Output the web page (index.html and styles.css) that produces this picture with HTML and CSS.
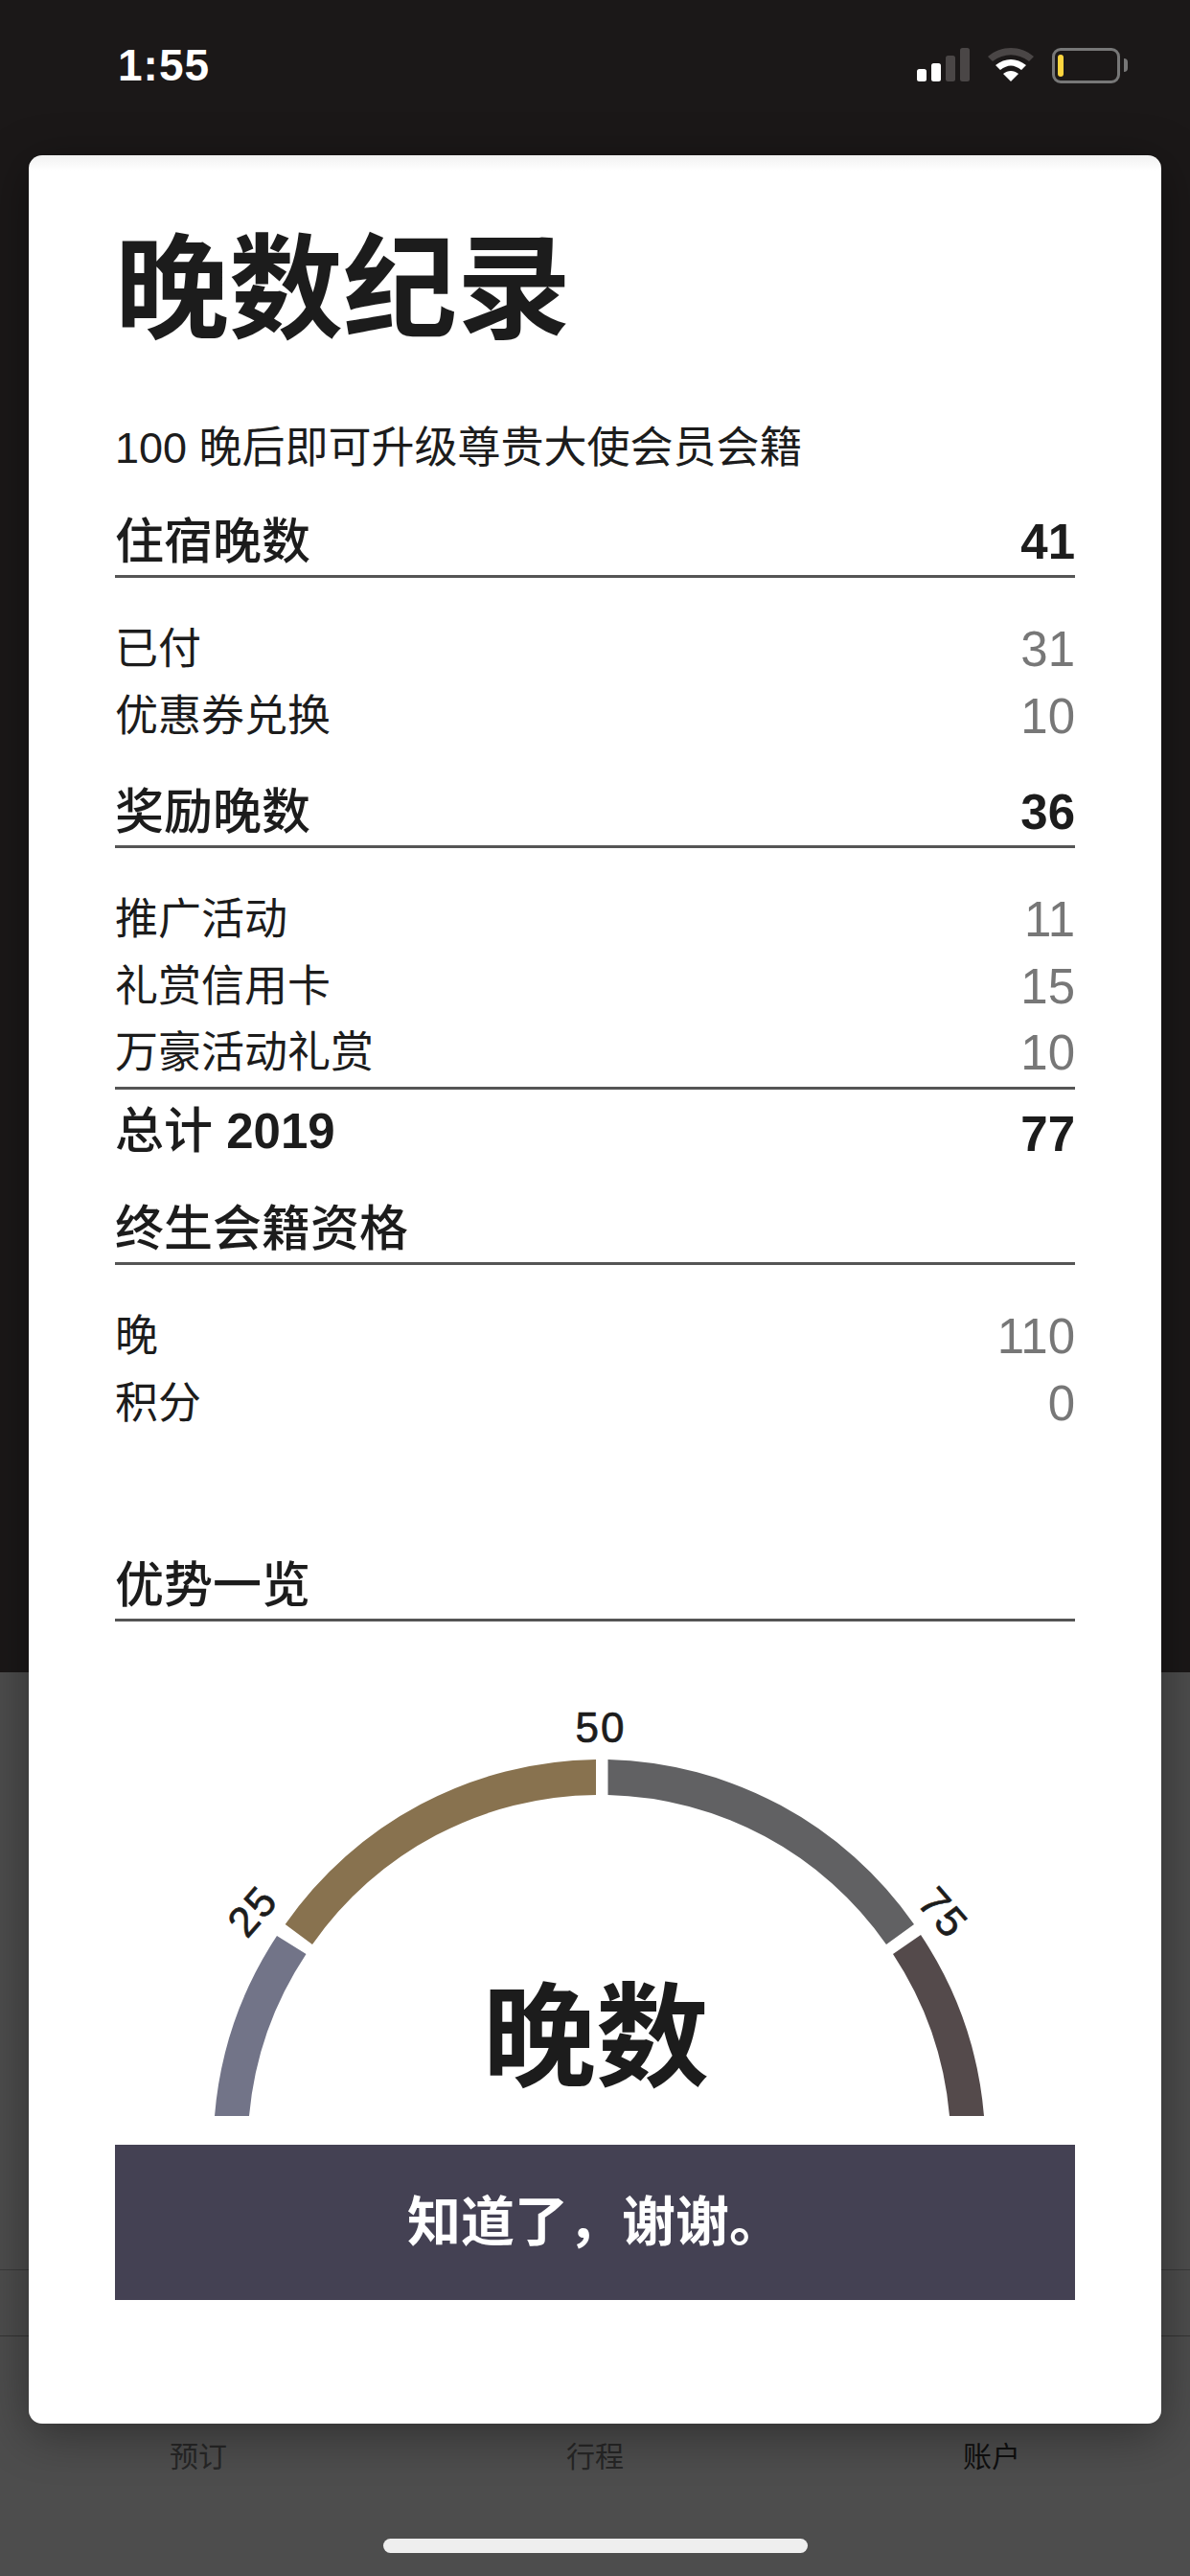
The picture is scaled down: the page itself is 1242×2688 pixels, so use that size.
FILE: index.html
```html
<!DOCTYPE html>
<html lang="zh">
<head>
    <title>晚数纪录</title>
    <meta name="viewport" content="width=device-width, initial-scale=1">
    <link rel="stylesheet" href="styles.css">
</head>

<body>
<div class="screen">
    <div class="upper">
        <div class="status">
            <span class="time">1:55</span>
            <div class="status-icons">
                <svg class="signal" width="55" height="36" viewBox="0 0 55 36">
                    <rect x="0" y="22" width="10" height="13" rx="2.5" fill="#fff"/>
                    <rect x="15" y="16" width="10" height="19" rx="2.5" fill="#fff"/>
                    <rect x="30" y="8" width="10" height="27" rx="2.5" fill="#4a4646"/>
                    <rect x="45" y="0" width="10" height="35" rx="2.5" fill="#4a4646"/>
                </svg>
                <svg class="wifi" width="48" height="36" viewBox="0 0 48 36">
                    <path d="M0 9 C14 -3 34 -3 48 9 L43 14 C31 5 17 5 5 14 Z" fill="#4a4646"/>
                    <path d="M8 18 C18 10 30 10 40 18 L35 23 C27 17 21 17 13 23 Z" fill="#fff"/>
                    <path d="M16 27 C21 23 27 23 32 27 L24 35 Z" fill="#fff"/>
                </svg>
                <div class="battery">
                    <div class="battery-body"><div class="battery-level"></div></div>
                    <div class="battery-cap"></div>
                </div>
            </div>
        </div>
    </div>

    <div class="lower">
        <div class="lower-band"></div>
        <div class="tabs">
            <span>预订</span>
            <span>行程</span>
            <span class="tab-on">账户</span>
        </div>
        <div class="home-bar"></div>
    </div>

    <div class="sheet">
        <h1 class="title">晚数纪录</h1>
        <p class="intro">100 晚后即可升级尊贵大使会员会籍</p>

        <div class="head head-stay"><span>住宿晚数</span><span class="num">41</span></div>
        <div class="rows">
            <div class="row"><span>已付</span><span class="val">31</span></div>
            <div class="row"><span>优惠券兑换</span><span class="val">10</span></div>
        </div>

        <div class="head"><span>奖励晚数</span><span class="num">36</span></div>
        <div class="rows">
            <div class="row"><span>推广活动</span><span class="val">11</span></div>
            <div class="row"><span>礼赏信用卡</span><span class="val">15</span></div>
            <div class="row"><span>万豪活动礼赏</span><span class="val">10</span></div>
        </div>

        <div class="total"><span>总计 <span class="num">2019</span></span><span class="num total-num">77</span></div>

        <div class="head head-life"><span>终生会籍资格</span></div>
        <div class="rows">
            <div class="row"><span>晚</span><span class="val">110</span></div>
            <div class="row"><span>积分</span><span class="val">0</span></div>
        </div>

        <div class="head head-glance"><span>优势一览</span></div>

        <svg class="gauge" width="1002" height="500" viewBox="120 1740 1002 500">
            <path d="M224 2208 A401.500 401.500 0 0 1 289 2020 L319.500 2039 A365 365 0 0 0 260 2208 Z" fill="#727488"/>
            <path d="M297.700 2008 A401.500 401.500 0 0 1 622 1836 L622 1873 A365 365 0 0 0 326 2029 Z" fill="#88724f"/>
            <path d="M634.500 1836 A401.500 401.500 0 0 1 954 2008 L925 2029 A365 365 0 0 0 634.500 1873 Z" fill="#616163"/>
            <path d="M961 2019 A401.500 401.500 0 0 1 1027 2208 L991 2208 A365 365 0 0 0 932 2039 Z" fill="#544a4b"/>
            <text class="gauge-tick" x="627" y="1818" text-anchor="middle">50</text>
            <text class="gauge-tick" text-anchor="middle" transform="translate(275 2004) rotate(-49)">25</text>
            <text class="gauge-tick" text-anchor="middle" transform="translate(973 2006) rotate(49)">75</text>
            <text class="gauge-word" x="622" y="2168" text-anchor="middle">晚数</text>
        </svg>

        <div class="ok-btn">知道了，谢谢。</div>
    </div>
</div>
</body>
</html>
```

FILE: styles.css
```css
html, body {
    margin: 0;
    padding: 0;
}
body {
    width: 1242px;
    height: 2688px;
    overflow: hidden;
    font-family: "Liberation Sans", "Noto Sans CJK SC", sans-serif;
    color: #1c1c1c;
}
.screen {
    position: relative;
    width: 1242px;
    height: 2688px;
    display: flex;
    flex-direction: column;
}
.upper {
    height: 1745px;
    background-color: #1b1818;
}
.status {
    display: flex;
    justify-content: space-between;
    align-items: center;
    height: 50px;
    padding: 43px 65px 0 123px;
}
.time {
    color: #fff;
    font-size: 46px;
    font-weight: 700;
    letter-spacing: 1px;
}
.status-icons {
    display: flex;
    align-items: center;
    gap: 19px;
}
.battery {
    display: flex;
    align-items: center;
}
.battery-body {
    box-sizing: border-box;
    width: 71px;
    height: 37px;
    padding: 4px 3px;
    border: 3px solid #777;
    border-radius: 9px;
}
.battery-level {
    width: 6px;
    height: 23px;
    border-radius: 3px;
    background-color: #fcd53f;
}
.battery-cap {
    width: 4px;
    height: 14px;
    margin-left: 4px;
    border-radius: 0 5px 5px 0;
    background-color: #777;
}
.lower {
    flex: 1;
    display: flex;
    flex-direction: column;
    background-color: #4d4d4d;
}
.lower-band {
    height: 68px;
    margin-top: 623px;
    border-top: 1px solid #3a3a3a;
    border-bottom: 1px solid #353535;
}
.tabs {
    display: grid;
    grid-template-columns: repeat(3, 1fr);
    margin-top: 106px;
    font-size: 30px;
    line-height: 40px;
    text-align: center;
    color: #262626;
}
.tab-on {
    color: #0f0f0f;
}
.home-bar {
    width: 443px;
    height: 15px;
    margin: 65px auto 0;
    border-radius: 8px;
    background-color: #eeeeee;
}
.sheet {
    position: absolute;
    top: 162px;
    left: 30px;
    box-sizing: border-box;
    width: 1182px;
    height: 2367px;
    padding: 75px 90px 0;
    border-radius: 14px;
    background: linear-gradient(#f1f1f1, #fff 16px);
    box-shadow: 0 10px 50px rgba(0, 0, 0, 0.4);
}
.title {
    margin: 0;
    font-size: 119px;
    line-height: 132px;
    font-weight: 700;
}
.intro {
    margin: 64px 0 0;
    font-size: 45px;
    line-height: 69px;
}
.head, .total {
    display: flex;
    justify-content: space-between;
    font-size: 51px;
    line-height: 69px;
    font-weight: 500;
}
.head {
    margin-top: 31px;
    border-bottom: 3px solid #555;
}
.head-stay {
    margin-top: 29px;
}
.num {
    font-size: 51px;
    font-weight: 700;
}
.rows {
    margin-top: 40px;
}
.row {
    display: flex;
    justify-content: space-between;
    font-size: 45px;
    line-height: 69.500px;
}
.val {
    font-size: 51px;
    color: #777;
}
.total {
    margin-top: 0.500px;
    padding-top: 9px;
    border-top: 3px solid #555;
}
.total-num {
    margin: 3px 0 -3px;
}
.head-life {
    margin-top: 33px;
}
.head-glance {
    margin-top: 121px;
}
.gauge {
    display: block;
    margin-top: 48px;
    overflow: visible;
}
.gauge-tick {
    font-size: 44px;
    letter-spacing: 2px;
    fill: #1c1c1c;
    stroke: #1c1c1c;
    stroke-width: 0.700px;
}
.gauge-word {
    font-size: 118px;
    font-weight: 700;
    fill: #1c1c1c;
}
.ok-btn {
    height: 162px;
    margin-top: -2px;
    font-size: 56px;
    font-weight: 700;
    line-height: 162px;
    text-align: center;
    color: #fff;
    background-color: #444153;
}
```
